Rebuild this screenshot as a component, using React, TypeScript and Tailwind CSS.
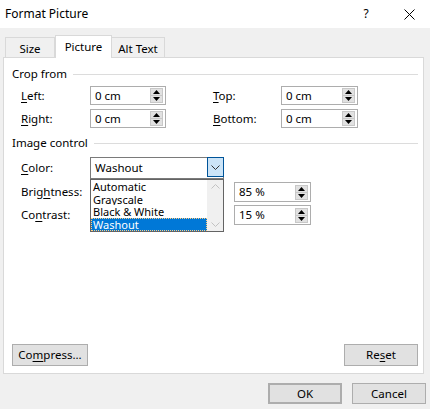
import type { ReactNode } from "react";

const font = { fontFamily: '"Segoe UI", "Noto Sans", sans-serif' };

function U({ children }: { children: ReactNode }) {
  return <span className="underline underline-offset-2 decoration-1">{children}</span>;
}

function Spinner() {
  return (
    <div className="flex flex-col w-[13px] h-[15px] my-auto mr-[2px] bg-[#e1e1e1] border border-[#c8c8c8]">
      <div className="flex-1 flex items-center justify-center border-b border-[#c8c8c8]">
        <svg width="7" height="4" viewBox="0 0 7 4">
          <path d="M3.5 0 L7 4 L0 4 Z" fill="#000" />
        </svg>
      </div>
      <div className="flex-1 flex items-center justify-center">
        <svg width="7" height="4" viewBox="0 0 7 4">
          <path d="M0 0 L7 0 L3.5 4 Z" fill="#000" />
        </svg>
      </div>
    </div>
  );
}

function SpinBox({ value, className }: { value: string; className: string }) {
  return (
    <div className={`flex border border-[#adadad] bg-white ${className}`}>
      <span className="flex-1 pl-[4px] leading-none self-center">{value}</span>
      <Spinner />
    </div>
  );
}

function Section({ title, children }: { title: string; children: ReactNode }) {
  return (
    <div className="flex flex-col">
      <div className="flex items-center gap-[6px] h-[16px]">
        <span>{title}</span>
        <div className="flex-1 h-px bg-[#dcdcdc]" />
      </div>
      {children}
    </div>
  );
}

function Button({ children, className = "" }: { children: ReactNode; className?: string }) {
  return (
    <button
      type="button"
      className={`flex items-center justify-center bg-[#e1e1e1] border border-[#adadad] ${className}`}
    >
      {children}
    </button>
  );
}

export default function App() {
  const options = ["Automatic", "Grayscale", "Black & White"];

  return (
    <div className="w-[430px] h-[409px] bg-[#f0f0f0] text-[11.5px] text-black flex flex-col" style={font}>
      {/* title bar */}
      <div className="h-[28px] bg-white flex items-center pl-[5px] text-[12px]">
        <span className="flex-1">Format Picture</span>
        <span className="w-[14px] text-center mr-[31px]">?</span>
        <svg width="11" height="11" viewBox="0 0 11 11" className="mr-[15px]">
          <path d="M0.5 0.5 L10.5 10.5 M10.5 0.5 L0.5 10.5" stroke="#000" strokeWidth="1" />
        </svg>
      </div>

      {/* tabs */}
      <div className="flex items-end pl-[5px] h-[29px]">
        <div className="w-[50px] h-[20px] pt-[2px] border border-b-0 border-[#d9d9d9] bg-[#f0f0f0] flex items-center justify-center">
          Size
        </div>
        <div className="relative w-[57px] h-[23px] border border-b-0 border-[#d9d9d9] bg-white flex items-center justify-center -mb-px z-10">
          Picture
        </div>
        <div className="w-[53px] h-[20px] pt-[2px] border border-b-0 border-l-0 border-[#d9d9d9] bg-[#f0f0f0] flex items-center justify-center">
          Alt Text
        </div>
      </div>

      {/* page */}
      <div className="ml-[3px] w-[421px] h-[317px] border border-[#d9d9d9] bg-white flex flex-col pt-[8px] pl-[8px] pr-[5px] pb-[7px]">
        <Section title="Crop from">
          <div className="grid grid-cols-[69px_76px_47px_68px_77px] grid-rows-[19px_19px] gap-y-[4px] mt-[4px] pl-[9px] items-center">
            <span><U>L</U>eft:</span>
            <SpinBox value="0 cm" className="h-[19px]" />
            <span />
            <span><U>T</U>op:</span>
            <SpinBox value="0 cm" className="h-[19px]" />
            <span><U>R</U>ight:</span>
            <SpinBox value="0 cm" className="h-[19px]" />
            <span />
            <span><U>B</U>ottom:</span>
            <SpinBox value="0 cm" className="h-[19px]" />
          </div>
        </Section>

        <div className="mt-[7px]">
          <Section title="Image control">
            <div className="flex flex-col pl-[9px] mt-[6px]">
              <div className="flex items-center h-[22px]">
                <span className="w-[69px]"><U>C</U>olor:</span>
                <div className="relative w-[134px] h-[22px]">
                  <div className="flex h-full border border-[#7a7a7a] bg-white">
                    <span className="flex-1 pl-[4px] self-center">Washout</span>
                    <div className="w-[17px] h-full bg-[#cce4f7] border border-[#005499] -m-px flex items-center justify-center">
                      <svg width="9" height="5" viewBox="0 0 9 5">
                        <path d="M0.5 0.5 L4.5 4.5 L8.5 0.5" stroke="#333" fill="none" strokeWidth="1" />
                      </svg>
                    </div>
                  </div>
                  {/* open list */}
                  <div className="absolute left-0 top-[22px] w-[134px] h-[53px] border border-[#646464] bg-white flex z-20 text-[11px]">
                    <div className="flex-1 flex flex-col">
                      {options.map((o) => (
                        <div key={o} className="h-[13px] leading-[13px] pl-[2px] overflow-hidden">
                          {o}
                        </div>
                      ))}
                      <div className="h-[13px] leading-[11px] pl-[1px] bg-[#0078d7] text-white border border-dotted border-[#ffcc80] overflow-hidden">
                        Washout
                      </div>
                    </div>
                    <div className="w-[16px] bg-[#f0f0f0] flex flex-col items-center justify-between py-[4px]">
                      <svg width="9" height="5" viewBox="0 0 9 5">
                        <path d="M0.5 4.5 L4.5 0.5 L8.5 4.5" stroke="#c2c2c2" fill="none" />
                      </svg>
                      <svg width="9" height="5" viewBox="0 0 9 5">
                        <path d="M0.5 0.5 L4.5 4.5 L8.5 0.5" stroke="#c2c2c2" fill="none" />
                      </svg>
                    </div>
                  </div>
                </div>
              </div>

              <div className="flex items-center h-[20px] mt-[3px]">
                <span className="w-[213px]">Brig<U>h</U>tness:</span>
                <SpinBox value="85 %" className="w-[77px] h-[20px]" />
              </div>
              <div className="flex items-center h-[20px] mt-[3px]">
                <span className="w-[213px]">Co<U>n</U>trast:</span>
                <SpinBox value="15 %" className="w-[77px] h-[20px]" />
              </div>
            </div>
          </Section>
        </div>

        <div className="mt-auto flex justify-between">
          <Button className="w-[76px] h-[22px]">Co<U>m</U>press...</Button>
          <Button className="w-[74px] h-[22px]">Re<U>s</U>et</Button>
        </div>
      </div>

      {/* dialog buttons */}
      <div className="flex justify-end gap-[10px] mt-[9px] pr-[4px]">
        <Button className="w-[74px] h-[21px] border-2 border-[#0078d7]">OK</Button>
        <Button className="w-[74px] h-[21px]">Cancel</Button>
      </div>
    </div>
  );
}
